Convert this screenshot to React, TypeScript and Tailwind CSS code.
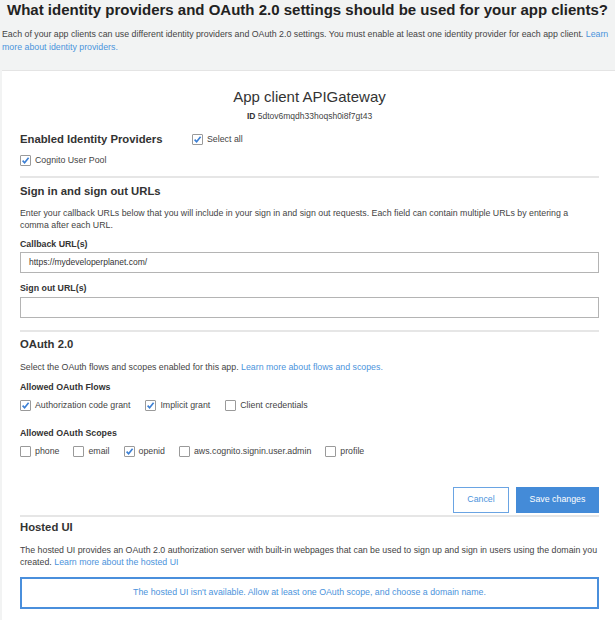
import React from "react"

const font = { fontFamily: '"Liberation Sans", Arial, sans-serif' }

function Check({ checked }: { checked?: boolean }) {
  return (
    <span className="flex h-[11px] w-[11px] shrink-0 items-center justify-center rounded-[1px] border border-[#9a9a9a] bg-white">
      {checked && (
        <svg width="9" height="9" viewBox="0 0 9 9">
          <path d="M1.6 4.6 L3.6 6.8 L7.6 1.8" fill="none" stroke="#3b7fd4" strokeWidth="1.6" />
        </svg>
      )}
    </span>
  )
}

function Option({ label, checked }: { label: string; checked?: boolean }) {
  return (
    <label className="flex items-center gap-[4px] text-[8.8px] leading-[12px] text-[#444]">
      <Check checked={checked} />
      <span>{label}</span>
    </label>
  )
}

const Rule = () => <div className="h-[2px] bg-[#e6e6e6]" />

export default function App() {
  return (
    <div className="min-h-[620px] w-[615px] overflow-hidden bg-[#f2f3f3]" style={font}>
      {/* page header */}
      <div className="pb-[16px]">
        <h1 className="whitespace-nowrap pl-[7px] text-[15px] font-bold leading-[20px] text-[#222]">
          What identity providers and OAuth 2.0 settings should be used for your app clients?
        </h1>
        <p className="mt-[8px] pl-[2px] text-[8.8px] leading-[13px] text-[#444]">
          Each of your app clients can use different identity providers and OAuth 2.0 settings. You must enable at least one
          identity provider for each app client.{" "}
          <a className="text-[#4b93dc]">Learn more about identity providers.</a>
        </p>
      </div>

      {/* panel */}
      <div className="ml-[2px] border-t border-[#e4e4e4] bg-white pb-[24px] pl-[18px] pr-[16px] pt-[17px] text-[#444]">
        <div className="text-center text-[15px] leading-[18px] text-[#333]">App client APIGateway</div>
        <div className="mt-[4px] text-center text-[8.5px] leading-[12px] text-[#444]">
          <b className="text-[#333]">ID</b> 5dtov6mqdh33hoqsh0i8f7gt43
        </div>

        <div className="mt-[10px] flex h-[14px] items-center">
          <h2 className="w-[172px] text-[11.3px] font-bold leading-[14px] text-[#333]">Enabled Identity Providers</h2>
          <Option label="Select all" checked />
        </div>
        <div className="mt-[8px]">
          <Option label="Cognito User Pool" checked />
        </div>

        <div className="mt-[10px]">
          <Rule />
        </div>

        {/* sign in / out */}
        <h2 className="mt-[6px] text-[11.3px] font-bold leading-[14px] text-[#333]">Sign in and sign out URLs</h2>
        <p className="mt-[9px] text-[8.8px] leading-[12px]">
          Enter your callback URLs below that you will include in your sign in and sign out requests. Each field can contain
          multiple URLs by entering a comma after each URL.
        </p>
        <div className="mt-[7px] text-[8.8px] font-bold leading-[12px] text-[#333]">Callback URL(s)</div>
        <div className="mt-[2px] flex h-[21px] items-center border border-[#b4b4b4] px-[8px] text-[8.5px] text-[#333]">
          https://mydeveloperplanet.com/
        </div>
        <div className="mt-[9px] text-[8.8px] font-bold leading-[12px] text-[#333]">Sign out URL(s)</div>
        <div className="mt-[3px] h-[21px] border border-[#b4b4b4]" />

        <div className="mt-[12px]">
          <Rule />
        </div>

        {/* oauth */}
        <h2 className="mt-[5px] text-[11.3px] font-bold leading-[14px] text-[#333]">OAuth 2.0</h2>
        <p className="mt-[10px] text-[8.8px] leading-[12px]">
          Select the OAuth flows and scopes enabled for this app.{" "}
          <a className="text-[#4b93dc]">Learn more about flows and scopes.</a>
        </p>
        <div className="mt-[8px] text-[8.8px] font-bold leading-[12px] text-[#333]">Allowed OAuth Flows</div>
        <div className="mt-[6px] flex gap-[15px]">
          <Option label="Authorization code grant" checked />
          <Option label="Implicit grant" checked />
          <Option label="Client credentials" />
        </div>
        <div className="mt-[16px] text-[8.8px] font-bold leading-[12px] text-[#333]">Allowed OAuth Scopes</div>
        <div className="mt-[6px] flex gap-[14px]">
          <Option label="phone" />
          <Option label="email" />
          <Option label="openid" checked />
          <Option label="aws.cognito.signin.user.admin" />
          <Option label="profile" />
        </div>

        <div className="mt-[30px] flex justify-end gap-[7px]">
          <button className="h-[26px] w-[56px] border border-[#6aa4e3] bg-white text-[8.8px] text-[#4b93dc]">Cancel</button>
          <button className="h-[26px] w-[83px] bg-[#448bd8] text-[8.8px] text-white">Save changes</button>
        </div>
        <div className="mt-[2px]">
          <Rule />
        </div>

        {/* hosted ui */}
        <h2 className="mt-[3px] text-[11.3px] font-bold leading-[14px] text-[#333]">Hosted UI</h2>
        <p className="mt-[10px] text-[8.8px] leading-[12px]">
          The hosted UI provides an OAuth 2.0 authorization server with built-in webpages that can be used to sign up and sign in
          users using the domain you created. <a className="text-[#4b93dc]">Learn more about the hosted UI</a>
        </p>
        <div className="mt-[9px] flex h-[32px] items-center justify-center border-2 border-[#4a8fdc] text-[8.8px] text-[#4b93dc]">
          The hosted UI isn't available. Allow at least one OAuth scope, and choose a domain name.
        </div>
      </div>
    </div>
  )
}
